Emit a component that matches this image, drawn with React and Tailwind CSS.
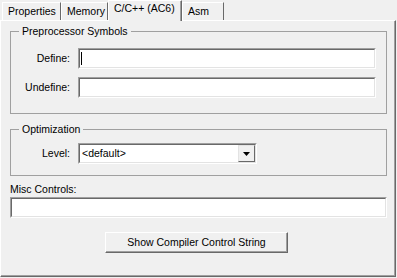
import React from "react";

const tabs = [
    { label: "Properties", w: "w-[59px]" },
    { label: "Memory", w: "w-[47px]" },
    { label: "C/C++ (AC6)", w: "w-[74px]", active: true },
    { label: "Asm", w: "w-[42px]" },
];

// sunken win32 edit box
function Edit({ caret = false, className = "" }) {
    return (
        <div className={`h-[21px] border border-t-[#a0a0a0] border-l-[#a0a0a0] border-b-white border-r-white ${className}`}>
            <div className="h-full bg-white border border-t-[#696969] border-l-[#696969] border-b-[#e3e3e3] border-r-[#e3e3e3] flex items-center pl-[1px]">
                {caret && <span className="w-px h-[13px] bg-black" />}
            </div>
        </div>
    );
}

function Group({ title, children, className = "" }) {
    return (
        <fieldset className={`m-0 p-0 border border-[#a0a0a0] ${className}`}>
            <legend className="ml-[8px] px-[3px] leading-[13px]">{title}</legend>
            {children}
        </fieldset>
    );
}

export default function App() {
    return (
        <div className="w-[397px] h-[278px] bg-[#f0f0f0] text-[10.5px] text-black font-['Liberation_Sans',Arial,sans-serif] overflow-hidden">
            {/* tab strip */}
            <div className="flex items-end h-[20px] pl-[2px]">
                {tabs.map((t) =>
                    t.active ? (
                        <div key={t.label}
                             className={`${t.w} h-[21px] -mb-px relative z-10 bg-[#f0f0f0] border-t border-l border-white border-r border-r-[#696969] shadow-[inset_-1px_0_0_#a0a0a0] pl-[5px] pt-[1px] leading-[13px]`}>
                            {t.label}
                        </div>
                    ) : (
                        <div key={t.label}
                             className={`${t.w} h-[18px] border-t border-l border-white border-r border-r-[#696969] pl-[5px] pt-[2px] leading-[13px]`}>
                            {t.label}
                        </div>
                    )
                )}
            </div>

            {/* tab page */}
            <div className="w-[396px] h-[257px] border border-t-white border-l-white border-r-[#696969] border-b-[#696969] shadow-[inset_-1px_-1px_0_#a0a0a0] pt-[4px] pl-[9px] pr-[8px] flex flex-col">
                <Group title="Preprocessor Symbols" className="pb-[15px]">
                    <div className="grid grid-cols-[59px_1fr] gap-x-[8px] gap-y-[8px] items-center mt-[10px] pr-[10px]">
                        <span className="text-right">Define:</span>
                        <Edit caret />
                        <span className="text-right">Undefine:</span>
                        <Edit />
                    </div>
                </Group>

                <Group title="Optimization" className="mt-[9px] pb-[11px]">
                    <div className="grid grid-cols-[59px_179px] gap-x-[8px] items-center mt-[7px]">
                        <span className="text-right">Level:</span>
                        <div className="h-[21px] border border-t-[#a0a0a0] border-l-[#a0a0a0] border-b-white border-r-white">
                            <div className="h-full bg-white border border-t-[#696969] border-l-[#696969] border-b-[#e3e3e3] border-r-[#e3e3e3] flex items-center">
                                <span className="flex-1 pl-[2px] leading-[13px]">&lt;default&gt;</span>
                                <div className="w-[17px] h-full bg-[#f0f0f0] border border-t-[#e3e3e3] border-l-[#e3e3e3] border-b-[#696969] border-r-[#696969] flex items-center justify-center">
                                    <svg width="7" height="4" viewBox="0 0 7 4">
                                        <path d="M0 0h7L3.5 4z" fill="#000" />
                                    </svg>
                                </div>
                            </div>
                        </div>
                    </div>
                </Group>

                <div className="mt-[7px] leading-[13px]">Misc Controls:</div>
                <Edit className="mt-[1px]" />

                <button className="mt-[14px] ml-[95px] w-[183px] h-[21px] bg-[#f0f0f0] border border-t-white border-l-white border-b-[#696969] border-r-[#696969] shadow-[inset_-1px_-1px_0_#a0a0a0] leading-[13px]">
                    Show Compiler Control String
                </button>
            </div>
        </div>
    );
}
